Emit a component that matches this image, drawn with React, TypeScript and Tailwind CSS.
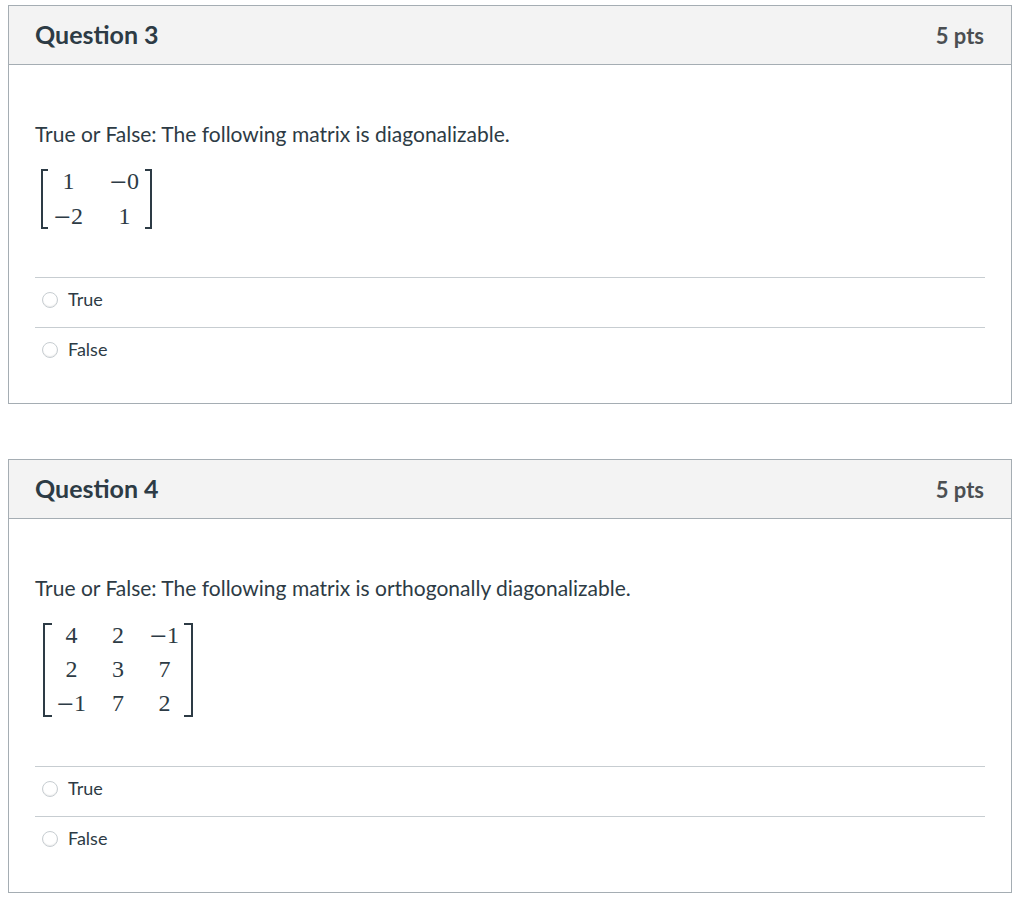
import React from 'react';

type Question = {
  title: string;
  prompt: string;
  rows: string[][];
  matrixClass: string;
  gridClass: string;
  bracketClass: string;
  bodyClass: string;
};

const questions: Question[] = [
  {
    title: 'Question 3',
    prompt: 'True or False: The following matrix is diagonalizable.',
    rows: [
      ['1', '−0'],
      ['−2', '1'],
    ],
    matrixClass: 'mt-[21px] mb-[48px] h-[60px] pl-[6px]',
    gridClass: 'grid-cols-[29px_29px] gap-x-[27px] auto-rows-[35px] px-[6px]',
    bracketClass: 'w-[7px]',
    bodyClass: 'pt-[55px]',
  },
  {
    title: 'Question 4',
    prompt: 'True or False: The following matrix is orthogonally diagonalizable.',
    rows: [
      ['4', '2', '−1'],
      ['2', '3', '7'],
      ['−1', '7', '2'],
    ],
    matrixClass: 'mt-[21px] mb-[49px] h-[94px] pl-[8px]',
    gridClass: 'grid-cols-[29px_16px_29px] gap-x-[24px] auto-rows-[34px] px-[5px] pb-[2px]',
    bracketClass: 'w-[9px]',
    bodyClass: 'pt-[55px]',
  },
];

const Cell = ({ value }: { value: string }) =>
  value.startsWith('−') ? (
    <span className="flex items-baseline">
      <span className="translate-y-[3px] text-[30px] leading-none">−</span>
      <span>{value.slice(1)}</span>
    </span>
  ) : (
    <span>{value}</span>
  );

const Matrix = ({ q }: { q: Question }) => (
  <div className={`flex items-stretch self-start text-[#2d3b45] ${q.matrixClass}`}>
    <div className={`border-y-2 border-l-2 border-[#2d3b45] ${q.bracketClass}`} />
    <div className={`grid content-center justify-items-center font-['Liberation_Serif',serif] text-[24px] leading-[34px] ${q.gridClass}`}>
      {q.rows.flat().map((cell, i) => (
        <Cell key={i} value={cell} />
      ))}
    </div>
    <div className={`border-y-2 border-r-2 border-[#2d3b45] ${q.bracketClass}`} />
  </div>
);

const Answer = ({ label }: { label: string }) => (
  <div className="flex h-[50px] items-center border-t border-[#c7cdd1] pb-[6px] pl-[7px]">
    <span className="h-[16px] w-[16px] rounded-full border border-[#c7cdd1] bg-white shadow-[inset_0_-1px_1px_rgba(0,0,0,0.08)]" />
    <span className="ml-[10px] text-[18px] text-[#2d3b45]">{label}</span>
  </div>
);

const QuestionCard = ({ q }: { q: Question }) => (
  <section className="border border-[#a5adb3] bg-white">
    <header className="flex h-[59px] items-center justify-between border-b border-[#a5adb3] bg-[#f3f3f3] px-[26px]">
      <h2 className="text-[25px] font-bold text-[#2d3b45]">{q.title}</h2>
      <span className="mr-[1px] pt-[1px] text-[22px] font-bold text-[#4b4f52]">5 pts</span>
    </header>
    <div className={`flex flex-col px-[26px] pb-[26px] ${q.bodyClass}`}>
      <p className="text-[21px] leading-[28px] text-[#2d3b45]">{q.prompt}</p>
      <Matrix q={q} />
      <Answer label="True" />
      <Answer label="False" />
    </div>
  </section>
);

export default function App() {
  return (
    <div className="flex h-[902px] w-[1024px] flex-col gap-[55px] overflow-hidden bg-white px-[8px] pt-[5px] pr-[12px] font-['Lato',sans-serif]">
      {questions.map((q) => (
        <QuestionCard key={q.title} q={q} />
      ))}
    </div>
  );
}
